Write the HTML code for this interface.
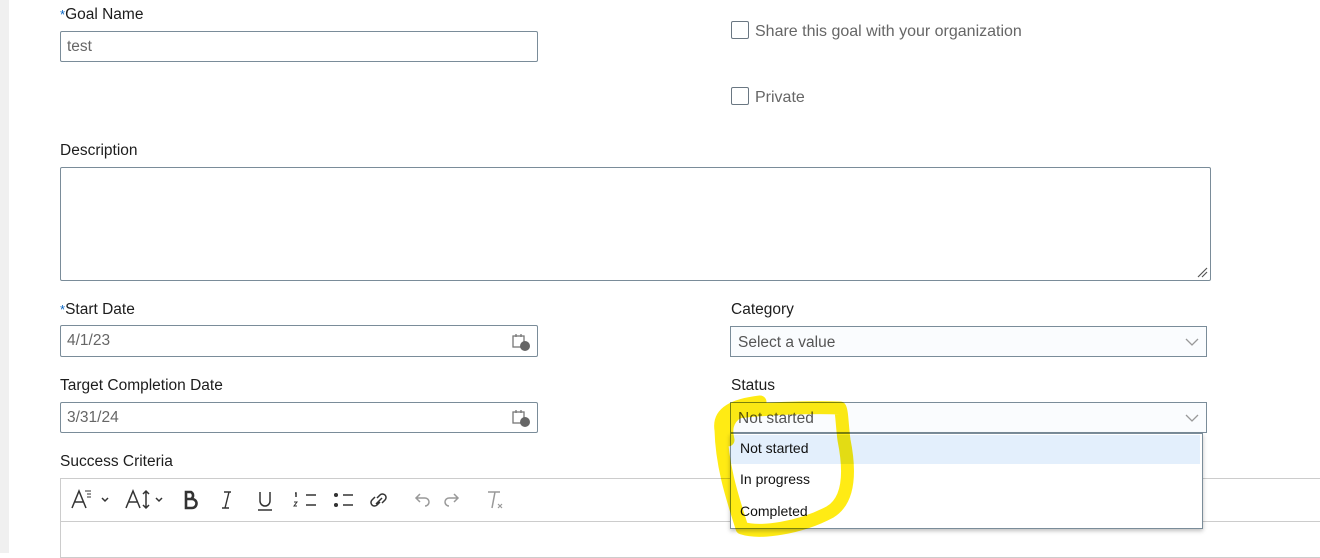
<!DOCTYPE html>
<html><head><meta charset="utf-8"><style>
*{box-sizing:border-box;margin:0;padding:0}
body{width:1320px;height:553px;overflow:hidden;background:#fff;position:relative;font-family:"Liberation Sans",sans-serif;color:#222}
.a{position:absolute}
.lbl{font-size:15.5px;color:#1d1d1d;line-height:20px}
.req{color:#0a66c2;font-size:13px;vertical-align:top}
.in{border:1px solid #7a8c99;border-radius:2px;background:#fff;font-size:15.5px;color:#666;padding-left:6px;line-height:30px}
.sel{border:1px solid #7a8c99;background:#fafcfe;font-size:15.5px;color:#555;padding-left:7px;line-height:31px}
.cb{width:18px;height:18px;border:1px solid #6a7782;border-radius:2px;background:#fff}
.ct{font-size:16px;color:#666;line-height:20px}
.opt{font-family:"Liberation Sans",Arial,sans-serif;font-size:14px;color:#111;position:absolute;left:9px}
.ic{position:absolute;top:489px}
</style></head><body>
<div class="a" style="left:0;top:0;width:9px;height:553px;background:#f0f0f0"></div>

<div class="a lbl" style="left:60px;top:5px"><span class="req">*</span>Goal Name</div>
<div class="a in" style="left:60px;top:31px;width:478px;height:31px">test</div>

<div class="a cb" style="left:731px;top:21px"></div>
<div class="a ct" style="left:755px;top:22px">Share this goal with your organization</div>
<div class="a cb" style="left:731px;top:87px"></div>
<div class="a ct" style="left:755px;top:88px">Private</div>

<div class="a lbl" style="left:60px;top:141px">Description</div>
<div class="a in" style="left:60px;top:167px;width:1151px;height:114px"></div>
<svg class="a" style="left:1196px;top:266px" width="12" height="12"><path d="M2 11L11 2M6 11L11 6" stroke="#555" stroke-width="1.2"/></svg>

<div class="a lbl" style="left:60px;top:300px"><span class="req">*</span>Start Date</div>
<div class="a in" style="left:60px;top:325px;width:478px;height:32px">4/1/23</div>
<div class="a lbl" style="left:731px;top:300px">Category</div>
<div class="a sel" style="left:730px;top:326px;width:477px;height:31px">Select a value</div>

<div class="a lbl" style="left:60px;top:376px">Target Completion Date</div>
<div class="a in" style="left:60px;top:402px;width:478px;height:31px">3/31/24</div>
<div class="a lbl" style="left:731px;top:376px">Status</div>
<div class="a sel" style="left:730px;top:402px;width:477px;height:31px">Not started</div>

<svg class="a" style="left:512px;top:333px" width="20" height="20"><rect x="1" y="3" width="11" height="11" fill="none" stroke="#777" stroke-width="1.3"/><path d="M4 1v3M9 1v3" stroke="#777" stroke-width="1.3"/><circle cx="13" cy="13" r="5" fill="#666"/></svg>
<svg class="a" style="left:512px;top:409px" width="20" height="20"><rect x="1" y="3" width="11" height="11" fill="none" stroke="#777" stroke-width="1.3"/><path d="M4 1v3M9 1v3" stroke="#777" stroke-width="1.3"/><circle cx="13" cy="13" r="5" fill="#666"/></svg>
<svg class="a" style="left:1185px;top:337px" width="14" height="10"><path d="M1 2l6 6 6-6" fill="none" stroke="#999" stroke-width="1.3"/></svg>
<svg class="a" style="left:1185px;top:413px" width="14" height="10"><path d="M1 2l6 6 6-6" fill="none" stroke="#999" stroke-width="1.3"/></svg>

<div class="a lbl" style="left:60px;top:452px">Success Criteria</div>
<div class="a" style="left:60px;top:478px;width:1270px;height:80px;border:1px solid #ccc"></div>
<div class="a" style="left:61px;top:521px;width:1260px;height:1px;background:#ccc"></div>

<svg class="a" style="left:60px;top:486px" width="460" height="30" fill="none" stroke="#333" stroke-width="1.5">
<path d="M12 22L19 5L26 22M14.5 16h9"/><path d="M25 5h6M27 8h4M27 11h4" stroke-width="1"/>
<path d="M42 12l3 3 3-3"/>
<path d="M66 22L73 5L80 22M68.5 16h9"/><path d="M86 5v17M83 8l3-3 3 3M83 19l3 3 3-3"/>
<path d="M96 12l3 3 3-3"/>
<path d="M126 6h5a4 4 0 0 1 0 7h-5zM126 13h6a4.5 4.5 0 0 1 0 9h-6zM126 6v16" stroke-width="2.6"/>
<path d="M164 6h7M162 22h7M169 6l-4 16" stroke-width="1.4"/>
<path d="M200 6v9a5 5 0 0 0 10 0V6M198 24h14"/>
<path d="M235 7h1v4M246 9h10M246 19h10" /><path d="M234 16h3l-3 4h3" stroke-width="1"/>
<circle cx="276" cy="9" r="1.3" fill="#333"/><circle cx="276" cy="19" r="1.3" fill="#333"/><path d="M283 9h10M283 19h10"/>
<path d="M315 11l-3 3a3.5 3.5 0 0 0 5 5l3-3M322 17l3-3a3.5 3.5 0 0 0-5-5l-3 3M316 18l6-6"/>
<path d="M360 11l-4 4 4 4M356 15h9a4 4 0 0 1 0 8" stroke="#999" transform="translate(0,-3)"/>
<path d="M394 11l4 4-4 4M398 15h-9a4 4 0 0 0 0 8" stroke="#999" transform="translate(0,-3)"/>
<path d="M428 6h12M435 6l-3 16" stroke="#999"/><path d="M438 18l4 4M442 18l-4 4" stroke="#999" stroke-width="1.2"/>
</svg>

<div class="a" style="left:730px;top:433px;width:473px;height:96px;border:1px solid #7a8c99;background:#fff;box-shadow:0 2px 4px rgba(0,0,0,.25)">
<div class="a" style="left:0;top:1px;width:469px;height:29px;background:#e3effc"></div>
<div class="opt" style="top:6px">Not started</div>
<div class="opt" style="top:37px">In progress</div>
<div class="opt" style="top:69px">Completed</div>
</div>

<svg class="a" style="left:0;top:0" width="1320" height="553"><path d="M760 402 C 735 405 718 412 721 430 C 722 470 735 505 742 528 C 760 534 800 528 830 512 C 850 500 850 470 844 440 C 842 425 842 412 840 408 C 815 407 770 408 738 412 C 725 420 726 432 728 440" fill="none" stroke="#ffea00" stroke-width="13" stroke-linecap="round" stroke-linejoin="round" opacity="0.92" style="mix-blend-mode:multiply"/></svg>
</body></html>
